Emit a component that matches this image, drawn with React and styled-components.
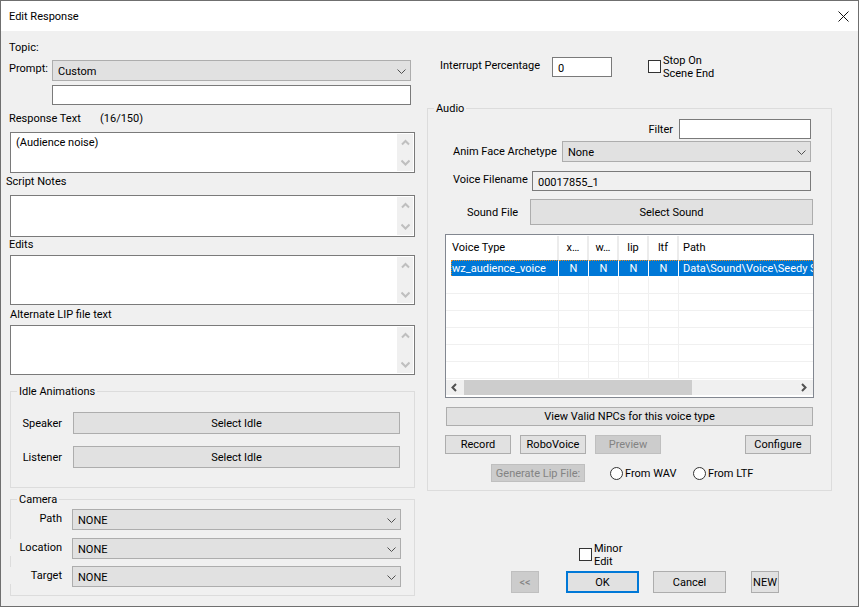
import React from "react";
import styled, { createGlobalStyle } from "styled-components";

const GlobalStyle = createGlobalStyle`
  html, body { margin: 0; padding: 0; background: #f0f0f0; }
  * { box-sizing: border-box; }
`;

const Window = styled.div`
  width: 859px;
  height: 607px;
  border: 1px solid #6f6f6f;
  background: #f0f0f0;
  color: #000;
  font-family: Roboto, "Open Sans", "Liberation Sans", sans-serif;
  font-size: 11px;
  line-height: 15px;
  overflow: hidden;
`;

const TitleBar = styled.div`
  height: 30px;
  background: #fff;
  display: flex;
  align-items: center;
  justify-content: space-between;
  padding: 0 9px 0 8px;
`;

const Body = styled.div`
  display: flex;
`;

const LeftColumn = styled.div`
  width: 426px;
  padding-left: 5px;
  flex: none;
`;

const RightColumn = styled.div`
  flex: 1;
  min-width: 0;
`;

const Label = styled.div`
  margin-left: ${(p) => p.$left || 0}px;
  margin-top: ${(p) => p.$top || 0}px;
  white-space: nowrap;
`;

const Row = styled.div`
  display: flex;
  align-items: center;
  white-space: nowrap;
  margin-top: ${(p) => p.$top || 0}px;
  margin-left: ${(p) => p.$left || 0}px;
`;

const SideLabel = styled.div`
  width: ${(p) => p.$width}px;
  flex: none;
  text-align: ${(p) => p.$textAlign || "right"};
  margin-right: ${(p) => p.$gap || 0}px;
  white-space: nowrap;
  position: relative;
  top: ${(p) => p.$lift || 0}px;
`;

/* these labels paint over the left edge of the group box, as in the real dialog */
const CoverLabel = styled(SideLabel)`
  margin-left: -1px;
  height: 17px;
  line-height: 17px;
  background: #f0f0f0;
`;

const Field = styled.div`
  width: ${(p) => p.$width}px;
  height: 20px;
  flex: none;
  background: ${(p) => (p.$readOnly ? "#f0f0f0" : "#fff")};
  border: 1px solid #7a7a7a;
  padding: 3px 5px 1px;
  white-space: nowrap;
  overflow: hidden;
`;

const DropBox = styled.div`
  width: ${(p) => p.$width}px;
  height: 21px;
  flex: none;
  background: #e1e1e1;
  border: 1px solid #adadad;
  display: flex;
  align-items: center;
  justify-content: space-between;
  padding: 1px 4px 0 5px;
`;

const TextArea = styled.div`
  width: 405px;
  height: ${(p) => p.$height}px;
  margin-left: 4px;
  margin-top: ${(p) => p.$top || 0}px;
  background: #fff;
  border: 1px solid #7a7a7a;
  display: flex;
  padding: 1px;
`;

const TextContent = styled.div`
  flex: 1;
  padding: 1px 4px;
`;

const ScrollTrack = styled.div`
  width: 16px;
  flex: none;
  background: #f0f0f0;
  display: flex;
  flex-direction: column;
  justify-content: space-between;
  align-items: center;
  padding: 5px 0 4px;
`;

const Group = styled.div`
  position: relative;
  width: ${(p) => p.$width}px;
  height: ${(p) => p.$height}px;
  margin-left: ${(p) => p.$left || 0}px;
  margin-top: ${(p) => p.$top || 0}px;
  border: 1px solid #dcdcdc;
  padding-top: ${(p) => p.$pad || 0}px;
`;

const Legend = styled.div`
  position: absolute;
  top: -8px;
  left: 6px;
  padding: 0 2px;
  background: #f0f0f0;
  white-space: nowrap;
`;

const Button = styled.button`
  width: ${(p) => p.$width}px;
  height: ${(p) => p.$height || 19}px;
  flex: none;
  margin-left: ${(p) => p.$left || 0}px;
  padding: 0;
  font: inherit;
  white-space: nowrap;
  color: ${(p) => (p.disabled ? "#838383" : "#000")};
  background: ${(p) => (p.disabled ? "#cccccc" : "#e1e1e1")};
  border: ${(p) =>
    p.$primary ? "2px solid #0078d7" : p.disabled ? "1px solid #bfbfbf" : "1px solid #adadad"};
`;

const CheckBox = styled.div`
  width: 13px;
  height: 13px;
  flex: none;
  margin-left: ${(p) => p.$left || 0}px;
  margin-top: -2px;
  background: #fff;
  border: 1px solid #333;
`;

const CheckText = styled.div`
  margin-left: 2px;
  line-height: 13px;
`;

const Radio = styled.div`
  width: 13px;
  height: 13px;
  flex: none;
  margin-left: ${(p) => p.$left || 0}px;
  margin-right: 2px;
  border-radius: 50%;
  background: #fff;
  border: 1px solid #333;
`;

const RadioText = styled.div`
  width: 50px;
  flex: none;
`;

const VoiceList = styled.div`
  width: 369px;
  height: 164px;
  margin: 9px 0 0 17px;
  background: #fff;
  border: 1px solid #828790;
  padding: 1px 0 0;
  display: flex;
  flex-direction: column;
`;

const ListRow = styled.div`
  display: grid;
  grid-template-columns: 113px 30px 30px 30px 30px 1fr;
  height: ${(p) => p.$height || 17}px;
  border-bottom: ${(p) => (p.$plain ? "none" : "1px solid #f0f0f0")};
`;

const HeadCell = styled.div`
  border-right: 2px solid #ececec;
  padding: ${(p) => (p.$center ? "0" : p.$first ? "0 6px" : "0 4px")};
  text-align: ${(p) => (p.$center ? "center" : "left")};
  line-height: 24px;
  white-space: nowrap;
  overflow: hidden;
  &:last-child { border-right: none; }
`;

const Cell = styled.div`
  border-right: 1px solid #f0f0f0;
  &:last-child { border-right: none; }
`;

const SelectedCell = styled.div`
  height: 16px;
  background: #0078d7;
  color: #fff;
  border-right: 1px solid #fff;
  border-top: 1px dotted #e8891c;
  border-left: ${(p) => (p.$indent ? "1px dotted #e8891c" : "none")};
  margin-left: ${(p) => (p.$indent ? "5px" : "0")};
  padding: 0 ${(p) => (p.$indent ? "0" : p.$text ? "4px" : "0")};
  text-align: ${(p) => (p.$text ? "left" : "center")};
  line-height: 15px;
  white-space: nowrap;
  overflow: hidden;
  &:last-child { border-right: none; }
`;

const HScroll = styled.div`
  height: 15px;
  margin-top: auto;
  margin-bottom: 2px;
  background: #f0f0f0;
  display: flex;
  align-items: center;
  justify-content: space-between;
  padding: 0 5px 0 4px;
  position: relative;
`;

const HThumb = styled.div`
  position: absolute;
  left: 18px;
  width: 228px;
  top: 0;
  bottom: 0;
  background: #cdcdcd;
`;

const Chevron = ({ dir = "down", color = "#505050", width = 1 }) => {
  const points = {
    down: "0.5,2.5 4.5,6.5 8.5,2.5",
    up: "1,5.5 4.5,2 8,5.5",
    left: "6,1 2.5,4.5 6,8",
    right: "3,1 6.5,4.5 3,8",
  }[dir];
  return (
    <svg width="9" height="9" viewBox="0 0 9 9" fill="none">
      <polyline points={points} stroke={color} strokeWidth={width} />
    </svg>
  );
};

const Select = ({ width, children }) => (
  <DropBox $width={width}>
    {children}
    <Chevron />
  </DropBox>
);

const MemoBox = ({ height, top, children }) => (
  <TextArea $height={height} $top={top}>
    <TextContent>{children}</TextContent>
    <ScrollTrack>
      <Chevron dir="up" color="#bfbfbf" width={2} />
      <Chevron color="#bfbfbf" width={2} />
    </ScrollTrack>
  </TextArea>
);

const emptyRows = [1, 2, 3, 4, 5, 6];

export default function App() {
  return (
    <Window>
      <GlobalStyle />
      <TitleBar>
        Edit Response
        <svg width="11" height="11" viewBox="0 0 11 11" fill="none">
          <path d="M0.5 0.5L10.5 10.5M10.5 0.5L0.5 10.5" stroke="#111" strokeWidth="1" />
        </svg>
      </TitleBar>
      <Body>
        <LeftColumn>
          <Label $left={3} $top={9}>Topic:</Label>
          <Row $top={5} $left={3}>
            <SideLabel $width={43} $textAlign="left" $lift={-2}>Prompt:</SideLabel>
            <Select width={359}>Custom</Select>
          </Row>
          <Row $top={4} $left={46}>
            <Field $width={359} />
          </Row>
          <Row $top={6} $left={3}>
            <SideLabel $width={91} $textAlign="left">Response Text</SideLabel>
            (16/150)
          </Row>
          <MemoBox height={41} top={6}>(Audience noise)</MemoBox>
          <Label $left={0} $top={1}>Script Notes</Label>
          <MemoBox height={42} top={6} />
          <Label $left={3}>Edits</Label>
          <MemoBox height={50} top={3} />
          <Label $left={4} $top={2}>Alternate LIP file text</Label>
          <MemoBox height={50} top={3} />
          <Group $width={405} $height={97} $left={4} $top={16} $pad={20}>
            <Legend>Idle Animations</Legend>
            <Row>
              <SideLabel $width={51} $gap={11}>Speaker</SideLabel>
              <Button $width={327} $height={22}>Select Idle</Button>
            </Row>
            <Row $top={12}>
              <SideLabel $width={51} $gap={11}>Listener</SideLabel>
              <Button $width={327} $height={22}>Select Idle</Button>
            </Row>
          </Group>
          <Group $width={405} $height={97} $left={4} $top={11} $pad={9}>
            <Legend>Camera</Legend>
            <Row>
              <SideLabel $width={51} $gap={10} $lift={-1}>Path</SideLabel>
              <Select width={329}>NONE</Select>
            </Row>
            <Row $top={8}>
              <CoverLabel $width={52} $gap={10} $lift={-1}>Location</CoverLabel>
              <Select width={329}>NONE</Select>
            </Row>
            <Row $top={7}>
              <CoverLabel $width={52} $gap={10} $lift={-1}>Target</CoverLabel>
              <Select width={329}>NONE</Select>
            </Row>
          </Group>
        </LeftColumn>
        <RightColumn>
          <Row $top={23} $left={13}>
            <SideLabel $width={112} $textAlign="left" $lift={-2}>Interrupt Percentage</SideLabel>
            <Field $width={60}>0</Field>
            <CheckBox $left={36} />
            <CheckText>Stop On<br />Scene End</CheckText>
          </Row>
          <Group $width={405} $height={383} $top={28} $pad={10}>
            <Legend>Audio</Legend>
            <Row>
              <SideLabel $width={245} $gap={6}>Filter</SideLabel>
              <Field $width={132} />
            </Row>
            <Row $top={2} $left={25}>
              <SideLabel $width={109} $textAlign="left">Anim Face Archetype</SideLabel>
              <Select width={249}>None</Select>
            </Row>
            <Row $top={9} $left={25}>
              <SideLabel $width={79} $textAlign="left" $lift={-2}>Voice Filename</SideLabel>
              <Field $width={279} $readOnly>00017855_1</Field>
            </Row>
            <Row $top={8} $left={39}>
              <SideLabel $width={63} $textAlign="left">Sound File</SideLabel>
              <Button $width={283} $height={26}>Select Sound</Button>
            </Row>
            <VoiceList>
              <ListRow $height={24} $plain>
                <HeadCell $first>Voice Type</HeadCell>
                <HeadCell $center>x…</HeadCell>
                <HeadCell $center>w…</HeadCell>
                <HeadCell $center>lip</HeadCell>
                <HeadCell $center>ltf</HeadCell>
                <HeadCell>Path</HeadCell>
              </ListRow>
              <ListRow $plain>
                <SelectedCell $text $indent>wz_audience_voice</SelectedCell>
                <SelectedCell>N</SelectedCell>
                <SelectedCell>N</SelectedCell>
                <SelectedCell>N</SelectedCell>
                <SelectedCell>N</SelectedCell>
                <SelectedCell $text>Data\Sound\Voice\Seedy S</SelectedCell>
              </ListRow>
              {emptyRows.map((row) => (
                <ListRow key={row}>
                  <Cell />
                  <Cell />
                  <Cell />
                  <Cell />
                  <Cell />
                  <Cell />
                </ListRow>
              ))}
              <HScroll>
                <Chevron dir="left" width={2} />
                <HThumb />
                <Chevron dir="right" width={2} />
              </HScroll>
            </VoiceList>
            <Row $top={9} $left={18}>
              <Button $width={367}>View Valid NPCs for this voice type</Button>
            </Row>
            <Row $top={9} $left={17}>
              <Button $width={66}>Record</Button>
              <Button $width={66} $left={9}>RoboVoice</Button>
              <Button $width={66} $left={9} disabled>Preview</Button>
              <Button $width={66} $left={84}>Configure</Button>
            </Row>
            <Row $top={10} $left={63}>
              <Button $width={94} $height={18} disabled>Generate Lip File:</Button>
              <Radio $left={25} />
              <RadioText>From WAV</RadioText>
              <Radio $left={18} />
              <RadioText>From LTF</RadioText>
            </Row>
          </Group>
          <Row $top={51} $left={152}>
            <CheckBox />
            <CheckText>Minor<br />Edit</CheckText>
          </Row>
          <Row $top={3} $left={84}>
            <Button $width={28} $height={22} disabled>&lt;&lt;</Button>
            <Button $width={73} $height={22} $left={27} $primary>OK</Button>
            <Button $width={73} $height={22} $left={14}>Cancel</Button>
            <Button $width={28} $height={22} $left={25}>NEW</Button>
          </Row>
        </RightColumn>
      </Body>
    </Window>
  );
}
